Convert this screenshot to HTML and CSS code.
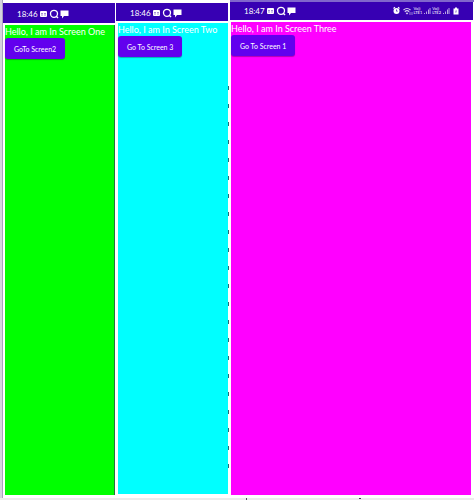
FILE: index.html
```html
<!DOCTYPE html>
<html lang="en">
<head>
    <meta charset="UTF-8">
    <meta name="viewport" content="width=device-width, initial-scale=1.0">
    <title>Screens</title>
    <link rel="stylesheet" href="styles.css">
</head>
<body>
    <!-- shared status bar icons -->
    <svg class="defs" aria-hidden="true">
        <symbol id="notifications" viewBox="0 0 30 10">
            <rect x="0" y="2" width="7" height="6" rx="1" fill="#fff" />
            <path d="M1 4.500h2M4 4.500h2M1 6h2M4 6h2" stroke="#6644b8" stroke-width="0.6" />
            <circle cx="14" cy="4.8" r="3.5" fill="none" stroke="#fff" stroke-width="1.3" />
            <path d="M16 7l2 2" stroke="#fff" stroke-width="1.4" />
            <path d="M20.500 1.500h8v5.500h-4.500l-2 2.500v-2.500h-1.500z" fill="#fff" />
        </symbol>
    </svg>

    <main class="screens">
        <section class="screen screen-one">
            <header class="status-bar">
                <span class="time">18:46</span>
                <svg class="notifications" aria-hidden="true"><use href="#notifications" /></svg>
            </header>
            <div class="content">
                <p>Hello, I am In Screen One</p>
                <button type="button">GoTo Screen2</button>
            </div>
        </section>

        <section class="screen screen-two">
            <header class="status-bar">
                <span class="time">18:46</span>
                <svg class="notifications" aria-hidden="true"><use href="#notifications" /></svg>
            </header>
            <div class="content">
                <p>Hello, I am In Screen Two</p>
                <button type="button">Go To Screen 3</button>
            </div>
        </section>

        <section class="screen screen-three">
            <header class="status-bar">
                <span class="time">18:47</span>
                <svg class="notifications" aria-hidden="true"><use href="#notifications" /></svg>
                <div class="system">
                    <svg width="20" height="10" viewBox="0 0 20 10" fill="none" stroke="#fff" aria-hidden="true">
                        <circle cx="3.500" cy="5" r="3" fill="#fff" stroke="none" />
                        <path d="M0.500 2.500l1.500-1.200M6.500 2.500l-1.500-1.200" stroke-width="1.200" />
                        <path d="M3.500 3.500v1.700h1.200" stroke="#3700b3" stroke-width="0.700" />
                        <path d="M10.500 4q3.500-3 7 0M11.800 5.700q2.200-2 4.400 0" stroke="#d9ceef" stroke-width="1.200" />
                        <path d="M13 7l1 1.200 1-1.200zM17 6v3M19 6v3" fill="#d9ceef" stroke="#d9ceef" stroke-width="0.600" />
                    </svg>
                    <span class="carrier"><span>Vo))</span><span>LTE1</span></span>
                    <svg width="8" height="10" viewBox="0 0 8 10" stroke="#b8a3e3" aria-hidden="true">
                        <path d="M1.500 7v1M3.500 5.500v2.500M5.500 3.500v4.500M7 2v6" />
                    </svg>
                    <span class="carrier"><span>Vo))</span><span>LTE2</span></span>
                    <svg width="8" height="10" viewBox="0 0 8 10" stroke="#b8a3e3" aria-hidden="true">
                        <path d="M1.500 7v1M3.500 5.500v2.500M5.500 3.500v4.500M7 2v6" />
                    </svg>
                    <svg class="battery" width="6" height="10" viewBox="0 0 6 10" aria-hidden="true">
                        <path d="M2 1.500h2v1h1.500v6h-5v-6h1.500z" fill="#fff" />
                        <path d="M3.500 4l-1 1.500h1l-1 1.500" fill="none" stroke="#8060c8" stroke-width="0.600" />
                    </svg>
                </div>
            </header>
            <div class="content">
                <p>Hello, I am In Screen Three</p>
                <button type="button">Go To Screen 1</button>
            </div>
        </section>
    </main>
    <footer class="page-edge"></footer>
</body>
</html>
```

FILE: styles.css
```css
:root {
    --status: #3700b3;
    --button: #6200ee;
    --edge: #ececec;
    --speck: #2b6870;
}

* {
    box-sizing: border-box;
}

body {
    margin: 0;
    min-height: 100vh;
    display: flex;
    flex-direction: column;
    background-color: #ffffff;
    color: #ffffff;
    font-family: Lato, "Liberation Sans", sans-serif;
}

.defs {
    display: none;
}

.screens {
    flex: 1;
    display: grid;
    grid-template-columns: 116fr 114fr 244fr;
}

.screen {
    display: flex;
    flex-direction: column;
    gap: 2px;
    min-width: 0;
}

.screen-one {
    padding: 3px 1px 3px 0;
    border-left: 2px solid #d5d3de;
    box-shadow: inset 1px 0 #a9a4bd;
}

/* dark marks showing between the second and third screens */
.screen-two {
    padding: 3px 2px 4px 0;
    background: repeating-linear-gradient(to bottom, transparent 0 14px, var(--speck) 14px 18px) right 1px top 72px / 1px 400px no-repeat;
}

.screen-three {
    padding: 0 1px 3px 0;
    border-top: 2px solid #8066cc;
}

.status-bar {
    display: flex;
    align-items: center;
    gap: 2px;
    height: 20px;
    padding: 2px 14px 0 14px;
    background-color: var(--status);
}

.screen-one .status-bar {
    margin-left: 1px;
}

.screen-two .status-bar,
.screen-three .status-bar {
    height: 18px;
}

.screen-three .status-bar {
    padding-top: 0;
}

.time {
    font-size: 8px;
    line-height: 10px;
}

.notifications {
    width: 30px;
    height: 10px;
}

.system {
    display: flex;
    align-items: center;
    gap: 1px;
    margin-left: auto;
}

.carrier {
    display: flex;
    flex-direction: column;
    color: #d9ceef;
    font-size: 4px;
    font-weight: bold;
    line-height: 4px;
}

.battery {
    margin-left: 2px;
}

.content {
    flex: 1;
    display: flex;
    flex-direction: column;
    align-items: flex-start;
}

.screen-one .content {
    margin-left: 3px;
    background-color: #00ff00;
    border-right: 1px solid #26743a;
}

.screen-two .content {
    margin-left: 2px;
    background-color: #00ffff;
}

.screen-three .content {
    margin: 0 2px 0 1px;
    background-color: #ff00ff;
}

.content p {
    margin: 0;
    font-size: 9px;
    line-height: 13px;
    white-space: nowrap;
}

.content button {
    height: 21px;
    padding: 0 9px;
    border: none;
    border-radius: 3px;
    background-color: var(--button);
    box-shadow: 0 1px 1px rgba(0, 0, 0, 0.3);
    color: #ffffff;
    font-family: inherit;
    font-size: 7px;
    line-height: 10px;
    white-space: nowrap;
    cursor: pointer;
}

.page-edge {
    height: 2px;
    background: linear-gradient(#4a4a5a, #4a4a5a) 52% 0 / 1px 2px no-repeat, linear-gradient(#4a2a5a, #4a2a5a) 76% 0 / 2px 1px no-repeat, var(--edge);
}
```
